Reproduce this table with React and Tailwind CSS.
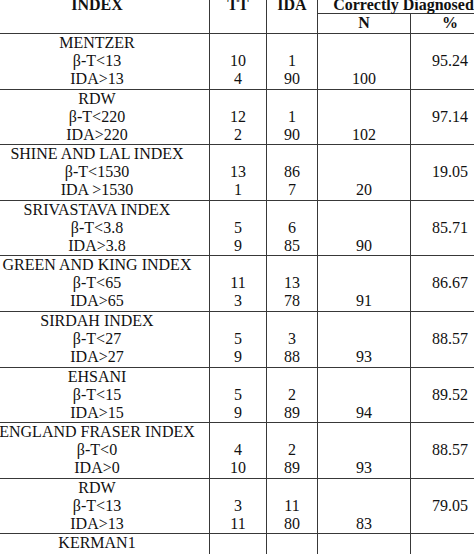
import React from "react";

const rows = [
  { name: "MENTZER", lo: "β-T<13", hi: "IDA>13", tt: ["10", "4"], ida: ["1", "90"], n: "100", pct: "95.24" },
  { name: "RDW", lo: "β-T<220", hi: "IDA>220", tt: ["12", "2"], ida: ["1", "90"], n: "102", pct: "97.14" },
  { name: "SHINE AND LAL INDEX", lo: "β-T<1530", hi: "IDA >1530", tt: ["13", "1"], ida: ["86", "7"], n: "20", pct: "19.05" },
  { name: "SRIVASTAVA INDEX", lo: "β-T<3.8", hi: "IDA>3.8", tt: ["5", "9"], ida: ["6", "85"], n: "90", pct: "85.71" },
  { name: "GREEN AND KING INDEX", lo: "β-T<65", hi: "IDA>65", tt: ["11", "3"], ida: ["13", "78"], n: "91", pct: "86.67" },
  { name: "SIRDAH INDEX", lo: "β-T<27", hi: "IDA>27", tt: ["5", "9"], ida: ["3", "88"], n: "93", pct: "88.57" },
  { name: "EHSANI", lo: "β-T<15", hi: "IDA>15", tt: ["5", "9"], ida: ["2", "89"], n: "94", pct: "89.52" },
  { name: "ENGLAND FRASER INDEX", lo: "β-T<0", hi: "IDA>0", tt: ["4", "10"], ida: ["2", "89"], n: "93", pct: "88.57" },
  { name: "RDW", lo: "β-T<13", hi: "IDA>13", tt: ["3", "11"], ida: ["11", "80"], n: "83", pct: "79.05" },
  { name: "KERMAN1", lo: "β-T<0", hi: "IDA>0", tt: ["", ""], ida: ["", ""], n: "", pct: "" },
];

const cols = "grid grid-cols-[225px_57px_51px_93px_78px]";
const line = "border-[#383838]";

function Lines({ items }) {
  return (
    <div className="flex flex-col">
      {items.map((t, i) => (
        <div key={i} className="h-[18px] leading-[18px] text-center whitespace-nowrap">
          {t || "\u00a0"}
        </div>
      ))}
    </div>
  );
}

export default function App() {
  return (
    <div className="w-[474px] h-[554px] overflow-hidden bg-white text-[#111111] text-[16px] font-['Liberation_Serif',serif]">
      <div className="-mt-[4px] -ml-[15px] w-[504px]">
        {/* header */}
        <div className={`${cols} grid-rows-[18px_19px] font-bold`}>
          <div className={`row-span-2 border-r ${line} h-[37px] leading-[18px] text-center`}>INDEX</div>
          <div className={`row-span-2 border-r ${line} leading-[18px] text-center`}>TT</div>
          <div className={`row-span-2 border-r ${line} leading-[18px] text-center`}>IDA</div>
          <div className={`col-span-2 border-b ${line} leading-[18px] text-center whitespace-nowrap`}>
            Correctly Diagnosed
          </div>
          <div className={`border-r ${line} leading-[18px] text-center`}>N</div>
          <div className="leading-[18px] text-center">%</div>
        </div>

        {rows.map((r, i) => (
          <div key={i} className={`${cols} h-[55.6px] border-t ${line}`}>
            <div className={`border-r ${line}`}>
              <Lines items={[r.name, r.lo, r.hi]} />
            </div>
            <div className={`border-r ${line}`}>
              <Lines items={["", ...r.tt]} />
            </div>
            <div className={`border-r ${line}`}>
              <Lines items={["", ...r.ida]} />
            </div>
            <div className={`border-r ${line}`}>
              <Lines items={["", "", r.n]} />
            </div>
            <div>
              <Lines items={["", r.pct, ""]} />
            </div>
          </div>
        ))}
      </div>
    </div>
  );
}
